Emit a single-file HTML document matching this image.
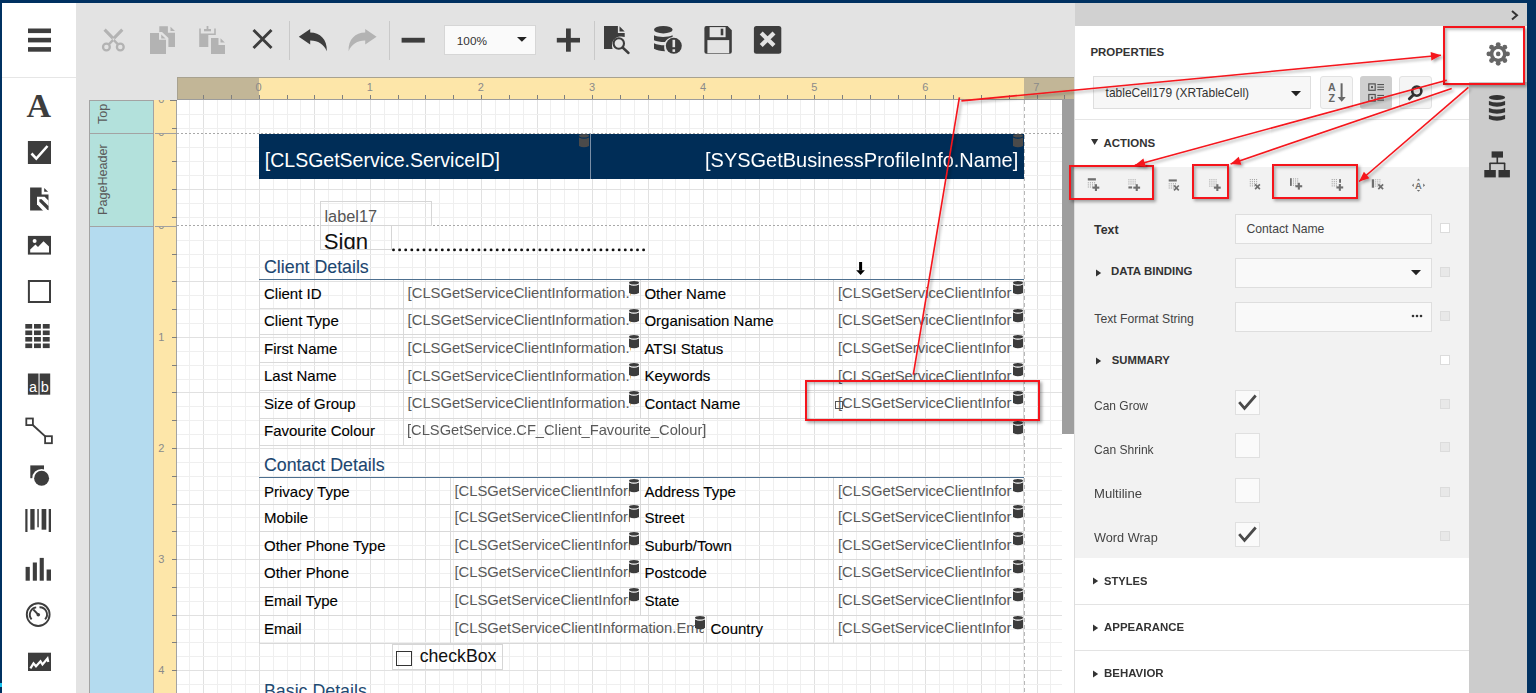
<!DOCTYPE html><html><head><meta charset="utf-8"><style>
html,body{margin:0;padding:0;}
body{width:1536px;height:693px;overflow:hidden;position:relative;background:#003161;font-family:"Liberation Sans",sans-serif;}
div{box-sizing:border-box;}
svg{position:absolute;overflow:visible;}
</style></head><body>
<div style="position:absolute;left:2px;top:3px;width:74px;height:690px;background:#fff;"></div>
<div style="position:absolute;left:2px;top:77px;width:74px;height:1px;background:#e6e6e6;"></div>
<div style="position:absolute;left:76px;top:3px;width:999px;height:690px;background:#e3e3e3;"></div>
<div style="position:absolute;left:1075px;top:3px;width:452px;height:23px;background:#d1d1d1;"></div>
<div style="position:absolute;left:1075px;top:26px;width:394px;height:667px;background:#fff;"></div>
<div style="position:absolute;left:1469px;top:26px;width:58px;height:667px;background:#cccccc;"></div>
<div style="position:absolute;left:1469px;top:26px;width:58px;height:56px;background:#fff;"></div>
<div style="position:absolute;left:177px;top:77px;width:898px;height:23px;background:#c2b697;border-top:1px solid #a8a290;border-left:1px solid #a8a290;border-bottom:1px solid #9c9c9c;"></div>
<div style="position:absolute;left:259px;top:78px;width:765px;height:21px;background:#fde6a9;"></div>
<div style="position:absolute;left:203px;top:95px;width:1px;height:4px;background:#7f7f7f;"></div>
<div style="position:absolute;left:231px;top:95px;width:1px;height:4px;background:#7f7f7f;"></div>
<div style="position:absolute;left:259px;top:95px;width:1px;height:4px;background:#7f7f7f;"></div>
<div style="position:absolute;left:287px;top:95px;width:1px;height:4px;background:#7f7f7f;"></div>
<div style="position:absolute;left:314px;top:95px;width:1px;height:4px;background:#7f7f7f;"></div>
<div style="position:absolute;left:342px;top:95px;width:1px;height:4px;background:#7f7f7f;"></div>
<div style="position:absolute;left:370px;top:95px;width:1px;height:4px;background:#7f7f7f;"></div>
<div style="position:absolute;left:398px;top:95px;width:1px;height:4px;background:#7f7f7f;"></div>
<div style="position:absolute;left:425px;top:95px;width:1px;height:4px;background:#7f7f7f;"></div>
<div style="position:absolute;left:453px;top:95px;width:1px;height:4px;background:#7f7f7f;"></div>
<div style="position:absolute;left:481px;top:95px;width:1px;height:4px;background:#7f7f7f;"></div>
<div style="position:absolute;left:509px;top:95px;width:1px;height:4px;background:#7f7f7f;"></div>
<div style="position:absolute;left:537px;top:95px;width:1px;height:4px;background:#7f7f7f;"></div>
<div style="position:absolute;left:564px;top:95px;width:1px;height:4px;background:#7f7f7f;"></div>
<div style="position:absolute;left:592px;top:95px;width:1px;height:4px;background:#7f7f7f;"></div>
<div style="position:absolute;left:620px;top:95px;width:1px;height:4px;background:#7f7f7f;"></div>
<div style="position:absolute;left:648px;top:95px;width:1px;height:4px;background:#7f7f7f;"></div>
<div style="position:absolute;left:675px;top:95px;width:1px;height:4px;background:#7f7f7f;"></div>
<div style="position:absolute;left:703px;top:95px;width:1px;height:4px;background:#7f7f7f;"></div>
<div style="position:absolute;left:731px;top:95px;width:1px;height:4px;background:#7f7f7f;"></div>
<div style="position:absolute;left:759px;top:95px;width:1px;height:4px;background:#7f7f7f;"></div>
<div style="position:absolute;left:787px;top:95px;width:1px;height:4px;background:#7f7f7f;"></div>
<div style="position:absolute;left:814px;top:95px;width:1px;height:4px;background:#7f7f7f;"></div>
<div style="position:absolute;left:842px;top:95px;width:1px;height:4px;background:#7f7f7f;"></div>
<div style="position:absolute;left:870px;top:95px;width:1px;height:4px;background:#7f7f7f;"></div>
<div style="position:absolute;left:898px;top:95px;width:1px;height:4px;background:#7f7f7f;"></div>
<div style="position:absolute;left:925px;top:95px;width:1px;height:4px;background:#7f7f7f;"></div>
<div style="position:absolute;left:953px;top:95px;width:1px;height:4px;background:#7f7f7f;"></div>
<div style="position:absolute;left:981px;top:95px;width:1px;height:4px;background:#7f7f7f;"></div>
<div style="position:absolute;left:1009px;top:95px;width:1px;height:4px;background:#7f7f7f;"></div>
<div style="position:absolute;left:1037px;top:95px;width:1px;height:4px;background:#7f7f7f;"></div>
<div style="position:absolute;left:1064px;top:95px;width:1px;height:4px;background:#7f7f7f;"></div>
<div style="position:absolute;left:255.60px;top:81.69px;font-size:11px;line-height:11px;height:11px;white-space:nowrap;color:#8a8a8a;">0</div>
<div style="position:absolute;left:366.71px;top:81.69px;font-size:11px;line-height:11px;height:11px;white-space:nowrap;color:#8a8a8a;">1</div>
<div style="position:absolute;left:477.82px;top:81.69px;font-size:11px;line-height:11px;height:11px;white-space:nowrap;color:#8a8a8a;">2</div>
<div style="position:absolute;left:588.93px;top:81.69px;font-size:11px;line-height:11px;height:11px;white-space:nowrap;color:#8a8a8a;">3</div>
<div style="position:absolute;left:700.04px;top:81.69px;font-size:11px;line-height:11px;height:11px;white-space:nowrap;color:#8a8a8a;">4</div>
<div style="position:absolute;left:811.15px;top:81.69px;font-size:11px;line-height:11px;height:11px;white-space:nowrap;color:#8a8a8a;">5</div>
<div style="position:absolute;left:922.26px;top:81.69px;font-size:11px;line-height:11px;height:11px;white-space:nowrap;color:#8a8a8a;">6</div>
<div style="position:absolute;left:1033.37px;top:81.69px;font-size:11px;line-height:11px;height:11px;white-space:nowrap;color:#8a8a8a;">7</div>
<div style="position:absolute;left:89px;top:100px;width:65px;height:34px;background:#b3e1dc;border:1px solid #a3a3a3;border-right:none;"></div>
<div style="position:absolute;left:89px;top:133px;width:65px;height:94px;background:#b3e1dc;border:1px solid #a3a3a3;border-right:none;"></div>
<div style="position:absolute;left:89px;top:226px;width:65px;height:467px;background:#b4dbef;border-top:1px solid #a3a3a3;border-left:1px solid #a3a3a3;"></div>
<div style="position:absolute;left:97px;top:123.7px;transform:rotate(-90deg);transform-origin:0 0;font-size:12.6px;line-height:12px;color:#5a5a5a;white-space:nowrap;">Top</div>
<div style="position:absolute;left:97px;top:214.9px;transform:rotate(-90deg);transform-origin:0 0;font-size:12.6px;line-height:12px;color:#5a5a5a;white-space:nowrap;">PageHeader</div>
<div style="position:absolute;left:153px;top:100px;width:24px;height:593px;background:#fde6a9;border-left:1px solid #a3a3a3;border-right:1px solid #a3a3a3;"></div>
<div style="position:absolute;left:170px;top:100px;width:7px;height:1px;background:#7f7f7f;"></div>
<div style="position:absolute;left:172px;top:128px;width:5px;height:1px;background:#7f7f7f;"></div>
<div style="position:absolute;left:170px;top:133px;width:7px;height:1px;background:#7f7f7f;"></div>
<div style="position:absolute;left:172px;top:161px;width:5px;height:1px;background:#7f7f7f;"></div>
<div style="position:absolute;left:172px;top:189px;width:5px;height:1px;background:#7f7f7f;"></div>
<div style="position:absolute;left:172px;top:217px;width:5px;height:1px;background:#7f7f7f;"></div>
<div style="position:absolute;left:170px;top:226px;width:7px;height:1px;background:#7f7f7f;"></div>
<div style="position:absolute;left:172px;top:254px;width:5px;height:1px;background:#7f7f7f;"></div>
<div style="position:absolute;left:172px;top:281px;width:5px;height:1px;background:#7f7f7f;"></div>
<div style="position:absolute;left:172px;top:309px;width:5px;height:1px;background:#7f7f7f;"></div>
<div style="position:absolute;left:172px;top:337px;width:5px;height:1px;background:#7f7f7f;"></div>
<div style="position:absolute;left:172px;top:365px;width:5px;height:1px;background:#7f7f7f;"></div>
<div style="position:absolute;left:172px;top:392px;width:5px;height:1px;background:#7f7f7f;"></div>
<div style="position:absolute;left:172px;top:420px;width:5px;height:1px;background:#7f7f7f;"></div>
<div style="position:absolute;left:172px;top:448px;width:5px;height:1px;background:#7f7f7f;"></div>
<div style="position:absolute;left:172px;top:476px;width:5px;height:1px;background:#7f7f7f;"></div>
<div style="position:absolute;left:172px;top:504px;width:5px;height:1px;background:#7f7f7f;"></div>
<div style="position:absolute;left:172px;top:531px;width:5px;height:1px;background:#7f7f7f;"></div>
<div style="position:absolute;left:172px;top:559px;width:5px;height:1px;background:#7f7f7f;"></div>
<div style="position:absolute;left:172px;top:587px;width:5px;height:1px;background:#7f7f7f;"></div>
<div style="position:absolute;left:172px;top:615px;width:5px;height:1px;background:#7f7f7f;"></div>
<div style="position:absolute;left:172px;top:642px;width:5px;height:1px;background:#7f7f7f;"></div>
<div style="position:absolute;left:172px;top:670px;width:5px;height:1px;background:#7f7f7f;"></div>
<div style="position:absolute;left:172px;top:698px;width:5px;height:1px;background:#7f7f7f;"></div>
<div style="position:absolute;left:153px;top:100.0px;width:18px;height:4px;overflow:hidden;"><div style="position:absolute;left:5.2px;top:-6.3px;font-size:11px;line-height:11px;color:#8a8a8a">0</div></div>
<div style="position:absolute;left:153px;top:133.3px;width:18px;height:4px;overflow:hidden;"><div style="position:absolute;left:5.2px;top:-6.3px;font-size:11px;line-height:11px;color:#8a8a8a">0</div></div>
<div style="position:absolute;left:155px;top:133px;width:22px;height:1px;background:#a0a0a0;"></div>
<div style="position:absolute;left:153px;top:225.8px;width:18px;height:4px;overflow:hidden;"><div style="position:absolute;left:5.2px;top:-6.3px;font-size:11px;line-height:11px;color:#8a8a8a">0</div></div>
<div style="position:absolute;left:155px;top:226px;width:22px;height:1px;background:#a0a0a0;"></div>
<div style="position:absolute;left:158.30px;top:331.60px;font-size:11px;line-height:11px;height:11px;white-space:nowrap;color:#8a8a8a;">1</div>
<div style="position:absolute;left:158.30px;top:442.71px;font-size:11px;line-height:11px;height:11px;white-space:nowrap;color:#8a8a8a;">2</div>
<div style="position:absolute;left:158.30px;top:553.82px;font-size:11px;line-height:11px;height:11px;white-space:nowrap;color:#8a8a8a;">3</div>
<div style="position:absolute;left:158.30px;top:664.93px;font-size:11px;line-height:11px;height:11px;white-space:nowrap;color:#8a8a8a;">4</div>
<div style="position:absolute;left:177px;top:100px;width:885px;height:593px;background:#fff;overflow:hidden;"></div>
<div style="position:absolute;left:189px;top:100px;width:1px;height:593px;background:#efefef"></div>
<div style="position:absolute;left:203px;top:100px;width:1px;height:593px;background:#e1e1e1"></div>
<div style="position:absolute;left:217px;top:100px;width:1px;height:593px;background:#efefef"></div>
<div style="position:absolute;left:231px;top:100px;width:1px;height:593px;background:#efefef"></div>
<div style="position:absolute;left:245px;top:100px;width:1px;height:593px;background:#efefef"></div>
<div style="position:absolute;left:259px;top:100px;width:1px;height:593px;background:#e1e1e1"></div>
<div style="position:absolute;left:273px;top:100px;width:1px;height:593px;background:#efefef"></div>
<div style="position:absolute;left:287px;top:100px;width:1px;height:593px;background:#efefef"></div>
<div style="position:absolute;left:300px;top:100px;width:1px;height:593px;background:#efefef"></div>
<div style="position:absolute;left:314px;top:100px;width:1px;height:593px;background:#e1e1e1"></div>
<div style="position:absolute;left:328px;top:100px;width:1px;height:593px;background:#efefef"></div>
<div style="position:absolute;left:342px;top:100px;width:1px;height:593px;background:#efefef"></div>
<div style="position:absolute;left:356px;top:100px;width:1px;height:593px;background:#efefef"></div>
<div style="position:absolute;left:370px;top:100px;width:1px;height:593px;background:#e1e1e1"></div>
<div style="position:absolute;left:384px;top:100px;width:1px;height:593px;background:#efefef"></div>
<div style="position:absolute;left:398px;top:100px;width:1px;height:593px;background:#efefef"></div>
<div style="position:absolute;left:412px;top:100px;width:1px;height:593px;background:#efefef"></div>
<div style="position:absolute;left:425px;top:100px;width:1px;height:593px;background:#e1e1e1"></div>
<div style="position:absolute;left:439px;top:100px;width:1px;height:593px;background:#efefef"></div>
<div style="position:absolute;left:453px;top:100px;width:1px;height:593px;background:#efefef"></div>
<div style="position:absolute;left:467px;top:100px;width:1px;height:593px;background:#efefef"></div>
<div style="position:absolute;left:481px;top:100px;width:1px;height:593px;background:#e1e1e1"></div>
<div style="position:absolute;left:495px;top:100px;width:1px;height:593px;background:#efefef"></div>
<div style="position:absolute;left:509px;top:100px;width:1px;height:593px;background:#efefef"></div>
<div style="position:absolute;left:523px;top:100px;width:1px;height:593px;background:#efefef"></div>
<div style="position:absolute;left:537px;top:100px;width:1px;height:593px;background:#e1e1e1"></div>
<div style="position:absolute;left:550px;top:100px;width:1px;height:593px;background:#efefef"></div>
<div style="position:absolute;left:564px;top:100px;width:1px;height:593px;background:#efefef"></div>
<div style="position:absolute;left:578px;top:100px;width:1px;height:593px;background:#efefef"></div>
<div style="position:absolute;left:592px;top:100px;width:1px;height:593px;background:#e1e1e1"></div>
<div style="position:absolute;left:606px;top:100px;width:1px;height:593px;background:#efefef"></div>
<div style="position:absolute;left:620px;top:100px;width:1px;height:593px;background:#efefef"></div>
<div style="position:absolute;left:634px;top:100px;width:1px;height:593px;background:#efefef"></div>
<div style="position:absolute;left:648px;top:100px;width:1px;height:593px;background:#e1e1e1"></div>
<div style="position:absolute;left:662px;top:100px;width:1px;height:593px;background:#efefef"></div>
<div style="position:absolute;left:675px;top:100px;width:1px;height:593px;background:#efefef"></div>
<div style="position:absolute;left:689px;top:100px;width:1px;height:593px;background:#efefef"></div>
<div style="position:absolute;left:703px;top:100px;width:1px;height:593px;background:#e1e1e1"></div>
<div style="position:absolute;left:717px;top:100px;width:1px;height:593px;background:#efefef"></div>
<div style="position:absolute;left:731px;top:100px;width:1px;height:593px;background:#efefef"></div>
<div style="position:absolute;left:745px;top:100px;width:1px;height:593px;background:#efefef"></div>
<div style="position:absolute;left:759px;top:100px;width:1px;height:593px;background:#e1e1e1"></div>
<div style="position:absolute;left:773px;top:100px;width:1px;height:593px;background:#efefef"></div>
<div style="position:absolute;left:787px;top:100px;width:1px;height:593px;background:#efefef"></div>
<div style="position:absolute;left:800px;top:100px;width:1px;height:593px;background:#efefef"></div>
<div style="position:absolute;left:814px;top:100px;width:1px;height:593px;background:#e1e1e1"></div>
<div style="position:absolute;left:828px;top:100px;width:1px;height:593px;background:#efefef"></div>
<div style="position:absolute;left:842px;top:100px;width:1px;height:593px;background:#efefef"></div>
<div style="position:absolute;left:856px;top:100px;width:1px;height:593px;background:#efefef"></div>
<div style="position:absolute;left:870px;top:100px;width:1px;height:593px;background:#e1e1e1"></div>
<div style="position:absolute;left:884px;top:100px;width:1px;height:593px;background:#efefef"></div>
<div style="position:absolute;left:898px;top:100px;width:1px;height:593px;background:#efefef"></div>
<div style="position:absolute;left:912px;top:100px;width:1px;height:593px;background:#efefef"></div>
<div style="position:absolute;left:925px;top:100px;width:1px;height:593px;background:#e1e1e1"></div>
<div style="position:absolute;left:939px;top:100px;width:1px;height:593px;background:#efefef"></div>
<div style="position:absolute;left:953px;top:100px;width:1px;height:593px;background:#efefef"></div>
<div style="position:absolute;left:967px;top:100px;width:1px;height:593px;background:#efefef"></div>
<div style="position:absolute;left:981px;top:100px;width:1px;height:593px;background:#e1e1e1"></div>
<div style="position:absolute;left:995px;top:100px;width:1px;height:593px;background:#efefef"></div>
<div style="position:absolute;left:1009px;top:100px;width:1px;height:593px;background:#efefef"></div>
<div style="position:absolute;left:1023px;top:100px;width:1px;height:593px;background:#efefef"></div>
<div style="position:absolute;left:1037px;top:100px;width:1px;height:593px;background:#e1e1e1"></div>
<div style="position:absolute;left:1050px;top:100px;width:1px;height:593px;background:#efefef"></div>
<div style="position:absolute;left:177px;top:114px;width:885px;height:1px;background:#efefef"></div>
<div style="position:absolute;left:177px;top:128px;width:885px;height:1px;background:#efefef"></div>
<div style="position:absolute;left:177px;top:147px;width:885px;height:1px;background:#efefef"></div>
<div style="position:absolute;left:177px;top:161px;width:885px;height:1px;background:#efefef"></div>
<div style="position:absolute;left:177px;top:175px;width:885px;height:1px;background:#efefef"></div>
<div style="position:absolute;left:177px;top:189px;width:885px;height:1px;background:#e1e1e1"></div>
<div style="position:absolute;left:177px;top:203px;width:885px;height:1px;background:#efefef"></div>
<div style="position:absolute;left:177px;top:217px;width:885px;height:1px;background:#efefef"></div>
<div style="position:absolute;left:177px;top:240px;width:885px;height:1px;background:#efefef"></div>
<div style="position:absolute;left:177px;top:254px;width:885px;height:1px;background:#efefef"></div>
<div style="position:absolute;left:177px;top:267px;width:885px;height:1px;background:#efefef"></div>
<div style="position:absolute;left:177px;top:281px;width:885px;height:1px;background:#e1e1e1"></div>
<div style="position:absolute;left:177px;top:295px;width:885px;height:1px;background:#efefef"></div>
<div style="position:absolute;left:177px;top:309px;width:885px;height:1px;background:#efefef"></div>
<div style="position:absolute;left:177px;top:323px;width:885px;height:1px;background:#efefef"></div>
<div style="position:absolute;left:177px;top:337px;width:885px;height:1px;background:#e1e1e1"></div>
<div style="position:absolute;left:177px;top:351px;width:885px;height:1px;background:#efefef"></div>
<div style="position:absolute;left:177px;top:365px;width:885px;height:1px;background:#efefef"></div>
<div style="position:absolute;left:177px;top:379px;width:885px;height:1px;background:#efefef"></div>
<div style="position:absolute;left:177px;top:392px;width:885px;height:1px;background:#e1e1e1"></div>
<div style="position:absolute;left:177px;top:406px;width:885px;height:1px;background:#efefef"></div>
<div style="position:absolute;left:177px;top:420px;width:885px;height:1px;background:#efefef"></div>
<div style="position:absolute;left:177px;top:434px;width:885px;height:1px;background:#efefef"></div>
<div style="position:absolute;left:177px;top:448px;width:885px;height:1px;background:#e1e1e1"></div>
<div style="position:absolute;left:177px;top:462px;width:885px;height:1px;background:#efefef"></div>
<div style="position:absolute;left:177px;top:476px;width:885px;height:1px;background:#efefef"></div>
<div style="position:absolute;left:177px;top:490px;width:885px;height:1px;background:#efefef"></div>
<div style="position:absolute;left:177px;top:504px;width:885px;height:1px;background:#e1e1e1"></div>
<div style="position:absolute;left:177px;top:517px;width:885px;height:1px;background:#efefef"></div>
<div style="position:absolute;left:177px;top:531px;width:885px;height:1px;background:#efefef"></div>
<div style="position:absolute;left:177px;top:545px;width:885px;height:1px;background:#efefef"></div>
<div style="position:absolute;left:177px;top:559px;width:885px;height:1px;background:#e1e1e1"></div>
<div style="position:absolute;left:177px;top:573px;width:885px;height:1px;background:#efefef"></div>
<div style="position:absolute;left:177px;top:587px;width:885px;height:1px;background:#efefef"></div>
<div style="position:absolute;left:177px;top:601px;width:885px;height:1px;background:#efefef"></div>
<div style="position:absolute;left:177px;top:615px;width:885px;height:1px;background:#e1e1e1"></div>
<div style="position:absolute;left:177px;top:629px;width:885px;height:1px;background:#efefef"></div>
<div style="position:absolute;left:177px;top:642px;width:885px;height:1px;background:#efefef"></div>
<div style="position:absolute;left:177px;top:656px;width:885px;height:1px;background:#efefef"></div>
<div style="position:absolute;left:177px;top:670px;width:885px;height:1px;background:#e1e1e1"></div>
<div style="position:absolute;left:177px;top:684px;width:885px;height:1px;background:#efefef"></div>
<div style="position:absolute;left:177px;top:698px;width:885px;height:1px;background:#efefef"></div>
<div style="position:absolute;left:177px;top:133px;width:885px;height:1px;background:repeating-linear-gradient(90deg,#a8a8a8 0 2px,transparent 2px 4px);"></div>
<div style="position:absolute;left:177px;top:225px;width:885px;height:1px;background:repeating-linear-gradient(90deg,#a8a8a8 0 2px,transparent 2px 4px);"></div>
<div style="position:absolute;left:1024px;top:100px;width:1px;height:593px;background:repeating-linear-gradient(180deg,#b8b8b8 0 4px,transparent 4px 7px);"></div>
<div style="position:absolute;left:1062px;top:100px;width:13px;height:334px;background:#9e9e9e;"></div>
<div style="position:absolute;left:1062px;top:434px;width:13px;height:259px;background:#fff;"></div>
<div style="position:absolute;left:1074px;top:77px;width:1px;height:616px;background:#dedede;"></div>
<div style="position:absolute;left:259px;top:134px;width:764.5px;height:45px;background:#002d57;"></div>
<div style="position:absolute;left:590px;top:134px;width:1px;height:45px;background:#7a8ea6;"></div>
<div style="position:absolute;left:264.80px;top:150.69px;font-size:19.5px;line-height:19.5px;height:19.5px;white-space:nowrap;color:#fff;">[CLSGetService.ServiceID]</div>
<div style="position:absolute;left:705.40px;top:150.69px;font-size:19.5px;line-height:19.5px;height:19.5px;white-space:nowrap;color:#fff;transform:scaleX(1.0248);transform-origin:0 0;">[SYSGetBusinessProfileInfo.Name]</div>
<svg style="left:579px;top:134px" width="10" height="14" viewBox="0 0 10 14"><ellipse cx="5" cy="1.8" rx="5" ry="1.8" fill="#4a4a4a"/><path d="M0 3.6 Q5 6 10 3.6 L10 12 Q5 14.4 0 12 Z" fill="#4a4a4a"/></svg>
<svg style="left:1013px;top:134px" width="10" height="14" viewBox="0 0 10 14"><ellipse cx="5" cy="1.8" rx="5" ry="1.8" fill="#4a4a4a"/><path d="M0 3.6 Q5 6 10 3.6 L10 12 Q5 14.4 0 12 Z" fill="#4a4a4a"/></svg>
<div style="position:absolute;left:320px;top:201px;width:112px;height:25px;border:1px solid #d6d6d6;"></div>
<div style="position:absolute;left:324.50px;top:207.90px;font-size:16.3px;line-height:16.3px;height:16.3px;white-space:nowrap;color:#555;">label17</div>
<div style="position:absolute;left:320px;top:225px;width:72px;height:25px;border:1px solid #d6d6d6;overflow:hidden;"><div style="position:absolute;left:2.8px;top:4.5px;font-size:22.2px;line-height:22px;color:#111;white-space:nowrap;">Sign</div></div>
<svg style="left:390px;top:246px" width="260" height="8"><circle cx="3.5" cy="3.9" r="1.45" fill="#111"/><circle cx="9.6" cy="3.9" r="1.45" fill="#111"/><circle cx="15.7" cy="3.9" r="1.45" fill="#111"/><circle cx="21.8" cy="3.9" r="1.45" fill="#111"/><circle cx="27.9" cy="3.9" r="1.45" fill="#111"/><circle cx="34.0" cy="3.9" r="1.45" fill="#111"/><circle cx="40.1" cy="3.9" r="1.45" fill="#111"/><circle cx="46.2" cy="3.9" r="1.45" fill="#111"/><circle cx="52.3" cy="3.9" r="1.45" fill="#111"/><circle cx="58.4" cy="3.9" r="1.45" fill="#111"/><circle cx="64.5" cy="3.9" r="1.45" fill="#111"/><circle cx="70.6" cy="3.9" r="1.45" fill="#111"/><circle cx="76.7" cy="3.9" r="1.45" fill="#111"/><circle cx="82.8" cy="3.9" r="1.45" fill="#111"/><circle cx="88.9" cy="3.9" r="1.45" fill="#111"/><circle cx="95.0" cy="3.9" r="1.45" fill="#111"/><circle cx="101.1" cy="3.9" r="1.45" fill="#111"/><circle cx="107.2" cy="3.9" r="1.45" fill="#111"/><circle cx="113.3" cy="3.9" r="1.45" fill="#111"/><circle cx="119.4" cy="3.9" r="1.45" fill="#111"/><circle cx="125.5" cy="3.9" r="1.45" fill="#111"/><circle cx="131.6" cy="3.9" r="1.45" fill="#111"/><circle cx="137.7" cy="3.9" r="1.45" fill="#111"/><circle cx="143.8" cy="3.9" r="1.45" fill="#111"/><circle cx="149.9" cy="3.9" r="1.45" fill="#111"/><circle cx="156.0" cy="3.9" r="1.45" fill="#111"/><circle cx="162.1" cy="3.9" r="1.45" fill="#111"/><circle cx="168.2" cy="3.9" r="1.45" fill="#111"/><circle cx="174.3" cy="3.9" r="1.45" fill="#111"/><circle cx="180.4" cy="3.9" r="1.45" fill="#111"/><circle cx="186.5" cy="3.9" r="1.45" fill="#111"/><circle cx="192.6" cy="3.9" r="1.45" fill="#111"/><circle cx="198.7" cy="3.9" r="1.45" fill="#111"/><circle cx="204.8" cy="3.9" r="1.45" fill="#111"/><circle cx="210.9" cy="3.9" r="1.45" fill="#111"/><circle cx="217.0" cy="3.9" r="1.45" fill="#111"/><circle cx="223.1" cy="3.9" r="1.45" fill="#111"/><circle cx="229.2" cy="3.9" r="1.45" fill="#111"/><circle cx="235.3" cy="3.9" r="1.45" fill="#111"/><circle cx="241.4" cy="3.9" r="1.45" fill="#111"/><circle cx="247.5" cy="3.9" r="1.45" fill="#111"/><circle cx="253.6" cy="3.9" r="1.45" fill="#111"/></svg>
<svg style="left:855px;top:261px" width="12" height="15" viewBox="0 0 12 15"><rect x="4.1" y="1" width="3" height="8.5" fill="#000"/><path d="M1.2 9.2 L9.9 9.2 L5.6 13.9 Z" fill="#000"/></svg>
<div style="position:absolute;left:264.00px;top:258.93px;font-size:17.8px;line-height:17.8px;height:17.8px;white-space:nowrap;color:#1b4670;-webkit-text-stroke:0.1px #1b4670;">Client Details</div>
<div style="position:absolute;left:259px;top:279px;width:765px;height:1px;background:#4d6f8f;"></div>
<div style="position:absolute;left:264.00px;top:286.10px;font-size:15px;line-height:15px;height:15px;white-space:nowrap;color:#000;-webkit-text-stroke:0.12px #000;">Client ID</div>
<div style="position:absolute;left:404px;top:281px;width:227px;height:26px;overflow:hidden;">
<div style="position:absolute;left:3.60px;top:5.27px;font-size:14.8px;line-height:14.8px;white-space:nowrap;color:#595959;transform:scaleX(1.0000);transform-origin:0 0">[CLSGetServiceClientInformation.ClientData]</div></div>
<svg style="left:629px;top:281px" width="10" height="14" viewBox="0 0 10 14"><ellipse cx="5" cy="1.8" rx="5" ry="1.8" fill="#3c3c3c"/><path d="M0 3.6 Q5 6 10 3.6 L10 12 Q5 14.4 0 12 Z" fill="#3c3c3c"/></svg>
<div style="position:absolute;left:644.40px;top:286.10px;font-size:15px;line-height:15px;height:15px;white-space:nowrap;color:#000;-webkit-text-stroke:0.12px #000;">Other Name</div>
<div style="position:absolute;left:834px;top:281px;width:177.5px;height:26px;overflow:hidden;">
<div style="position:absolute;left:4.00px;top:5.27px;font-size:14.8px;line-height:14.8px;white-space:nowrap;color:#595959;transform:scaleX(1.0000);transform-origin:0 0">[CLSGetServiceClientInformation.Data]</div></div>
<svg style="left:1013px;top:281px" width="10" height="14" viewBox="0 0 10 14"><ellipse cx="5" cy="1.8" rx="5" ry="1.8" fill="#3c3c3c"/><path d="M0 3.6 Q5 6 10 3.6 L10 12 Q5 14.4 0 12 Z" fill="#3c3c3c"/></svg>
<div style="position:absolute;left:264.00px;top:312.90px;font-size:15px;line-height:15px;height:15px;white-space:nowrap;color:#000;-webkit-text-stroke:0.12px #000;">Client Type</div>
<div style="position:absolute;left:404px;top:309px;width:227px;height:26px;overflow:hidden;">
<div style="position:absolute;left:3.60px;top:4.07px;font-size:14.8px;line-height:14.8px;white-space:nowrap;color:#595959;transform:scaleX(1.0000);transform-origin:0 0">[CLSGetServiceClientInformation.ClientData]</div></div>
<svg style="left:629px;top:309px" width="10" height="14" viewBox="0 0 10 14"><ellipse cx="5" cy="1.8" rx="5" ry="1.8" fill="#3c3c3c"/><path d="M0 3.6 Q5 6 10 3.6 L10 12 Q5 14.4 0 12 Z" fill="#3c3c3c"/></svg>
<div style="position:absolute;left:644.40px;top:312.90px;font-size:15px;line-height:15px;height:15px;white-space:nowrap;color:#000;-webkit-text-stroke:0.12px #000;">Organisation Name</div>
<div style="position:absolute;left:834px;top:309px;width:177.5px;height:26px;overflow:hidden;">
<div style="position:absolute;left:4.00px;top:4.07px;font-size:14.8px;line-height:14.8px;white-space:nowrap;color:#595959;transform:scaleX(1.0000);transform-origin:0 0">[CLSGetServiceClientInformation.Data]</div></div>
<svg style="left:1013px;top:309px" width="10" height="14" viewBox="0 0 10 14"><ellipse cx="5" cy="1.8" rx="5" ry="1.8" fill="#3c3c3c"/><path d="M0 3.6 Q5 6 10 3.6 L10 12 Q5 14.4 0 12 Z" fill="#3c3c3c"/></svg>
<div style="position:absolute;left:264.00px;top:340.70px;font-size:15px;line-height:15px;height:15px;white-space:nowrap;color:#000;-webkit-text-stroke:0.12px #000;">First Name</div>
<div style="position:absolute;left:404px;top:335px;width:227px;height:26px;overflow:hidden;">
<div style="position:absolute;left:3.60px;top:5.87px;font-size:14.8px;line-height:14.8px;white-space:nowrap;color:#595959;transform:scaleX(1.0000);transform-origin:0 0">[CLSGetServiceClientInformation.ClientData]</div></div>
<svg style="left:629px;top:335px" width="10" height="14" viewBox="0 0 10 14"><ellipse cx="5" cy="1.8" rx="5" ry="1.8" fill="#3c3c3c"/><path d="M0 3.6 Q5 6 10 3.6 L10 12 Q5 14.4 0 12 Z" fill="#3c3c3c"/></svg>
<div style="position:absolute;left:644.40px;top:340.70px;font-size:15px;line-height:15px;height:15px;white-space:nowrap;color:#000;-webkit-text-stroke:0.12px #000;">ATSI Status</div>
<div style="position:absolute;left:834px;top:335px;width:177.5px;height:26px;overflow:hidden;">
<div style="position:absolute;left:4.00px;top:5.87px;font-size:14.8px;line-height:14.8px;white-space:nowrap;color:#595959;transform:scaleX(1.0000);transform-origin:0 0">[CLSGetServiceClientInformation.Data]</div></div>
<svg style="left:1013px;top:335px" width="10" height="14" viewBox="0 0 10 14"><ellipse cx="5" cy="1.8" rx="5" ry="1.8" fill="#3c3c3c"/><path d="M0 3.6 Q5 6 10 3.6 L10 12 Q5 14.4 0 12 Z" fill="#3c3c3c"/></svg>
<div style="position:absolute;left:264.00px;top:368.40px;font-size:15px;line-height:15px;height:15px;white-space:nowrap;color:#000;-webkit-text-stroke:0.12px #000;">Last Name</div>
<div style="position:absolute;left:404px;top:363px;width:227px;height:26px;overflow:hidden;">
<div style="position:absolute;left:3.60px;top:5.57px;font-size:14.8px;line-height:14.8px;white-space:nowrap;color:#595959;transform:scaleX(1.0000);transform-origin:0 0">[CLSGetServiceClientInformation.ClientData]</div></div>
<svg style="left:629px;top:363px" width="10" height="14" viewBox="0 0 10 14"><ellipse cx="5" cy="1.8" rx="5" ry="1.8" fill="#3c3c3c"/><path d="M0 3.6 Q5 6 10 3.6 L10 12 Q5 14.4 0 12 Z" fill="#3c3c3c"/></svg>
<div style="position:absolute;left:644.40px;top:368.40px;font-size:15px;line-height:15px;height:15px;white-space:nowrap;color:#000;-webkit-text-stroke:0.12px #000;">Keywords</div>
<div style="position:absolute;left:834px;top:363px;width:177.5px;height:26px;overflow:hidden;">
<div style="position:absolute;left:4.00px;top:5.57px;font-size:14.8px;line-height:14.8px;white-space:nowrap;color:#595959;transform:scaleX(1.0000);transform-origin:0 0">[CLSGetServiceClientInformation.Data]</div></div>
<svg style="left:1013px;top:363px" width="10" height="14" viewBox="0 0 10 14"><ellipse cx="5" cy="1.8" rx="5" ry="1.8" fill="#3c3c3c"/><path d="M0 3.6 Q5 6 10 3.6 L10 12 Q5 14.4 0 12 Z" fill="#3c3c3c"/></svg>
<div style="position:absolute;left:264.00px;top:396.10px;font-size:15px;line-height:15px;height:15px;white-space:nowrap;color:#000;-webkit-text-stroke:0.12px #000;">Size of Group</div>
<div style="position:absolute;left:404px;top:391px;width:227px;height:26px;overflow:hidden;">
<div style="position:absolute;left:3.60px;top:5.27px;font-size:14.8px;line-height:14.8px;white-space:nowrap;color:#595959;transform:scaleX(1.0000);transform-origin:0 0">[CLSGetServiceClientInformation.ClientData]</div></div>
<svg style="left:629px;top:391px" width="10" height="14" viewBox="0 0 10 14"><ellipse cx="5" cy="1.8" rx="5" ry="1.8" fill="#3c3c3c"/><path d="M0 3.6 Q5 6 10 3.6 L10 12 Q5 14.4 0 12 Z" fill="#3c3c3c"/></svg>
<div style="position:absolute;left:644.40px;top:396.10px;font-size:15px;line-height:15px;height:15px;white-space:nowrap;color:#000;-webkit-text-stroke:0.12px #000;">Contact Name</div>
<div style="position:absolute;left:834px;top:391px;width:177.5px;height:26px;overflow:hidden;">
<div style="position:absolute;left:4.00px;top:5.27px;font-size:14.8px;line-height:14.8px;white-space:nowrap;color:#595959;transform:scaleX(1.0000);transform-origin:0 0">[CLSGetServiceClientInformation.Data]</div></div>
<svg style="left:1013px;top:391px" width="10" height="14" viewBox="0 0 10 14"><ellipse cx="5" cy="1.8" rx="5" ry="1.8" fill="#3c3c3c"/><path d="M0 3.6 Q5 6 10 3.6 L10 12 Q5 14.4 0 12 Z" fill="#3c3c3c"/></svg>
<div style="position:absolute;left:264.00px;top:422.90px;font-size:15px;line-height:15px;height:15px;white-space:nowrap;color:#000;-webkit-text-stroke:0.12px #000;">Favourite Colour</div>
<div style="position:absolute;left:407.30px;top:423.07px;font-size:14.8px;line-height:14.8px;height:14.8px;white-space:nowrap;color:#595959;transform:scaleX(0.9918);transform-origin:0 0;">[CLSGetService.CF_Client_Favourite_Colour]</div>
<svg style="left:1013px;top:421px" width="10" height="14" viewBox="0 0 10 14"><ellipse cx="5" cy="1.8" rx="5" ry="1.8" fill="#3c3c3c"/><path d="M0 3.6 Q5 6 10 3.6 L10 12 Q5 14.4 0 12 Z" fill="#3c3c3c"/></svg>
<div style="position:absolute;left:259px;top:308px;width:765px;height:1px;background:#d9d9d9;"></div>
<div style="position:absolute;left:259px;top:334px;width:765px;height:1px;background:#d9d9d9;"></div>
<div style="position:absolute;left:259px;top:362px;width:765px;height:1px;background:#d9d9d9;"></div>
<div style="position:absolute;left:259px;top:390px;width:765px;height:1px;background:#d9d9d9;"></div>
<div style="position:absolute;left:259px;top:418px;width:765px;height:1px;background:#d9d9d9;"></div>
<div style="position:absolute;left:259px;top:445px;width:765px;height:1px;background:#d9d9d9;"></div>
<div style="position:absolute;left:259px;top:280px;width:1px;height:165px;background:#d9d9d9;"></div>
<div style="position:absolute;left:403px;top:280px;width:1px;height:165px;background:#d9d9d9;"></div>
<div style="position:absolute;left:640px;top:280px;width:1px;height:138px;background:#d9d9d9;"></div>
<div style="position:absolute;left:833px;top:280px;width:1px;height:138px;background:#d9d9d9;"></div>
<div style="position:absolute;left:1023px;top:280px;width:1px;height:165px;background:#d9d9d9;"></div>
<div style="position:absolute;left:835px;top:401px;width:8px;height:8px;border:1px solid #555;"></div>
<div style="position:absolute;left:264.00px;top:456.53px;font-size:17.8px;line-height:17.8px;height:17.8px;white-space:nowrap;color:#1b4670;-webkit-text-stroke:0.1px #1b4670;">Contact Details</div>
<div style="position:absolute;left:259px;top:477px;width:765px;height:1px;background:#4d6f8f;"></div>
<div style="position:absolute;left:264.00px;top:483.50px;font-size:15px;line-height:15px;height:15px;white-space:nowrap;color:#000;-webkit-text-stroke:0.12px #000;">Privacy Type</div>
<div style="position:absolute;left:451px;top:479px;width:178.5px;height:26px;overflow:hidden;">
<div style="position:absolute;left:3.40px;top:4.67px;font-size:14.8px;line-height:14.8px;white-space:nowrap;color:#595959;transform:scaleX(1.0000);transform-origin:0 0">[CLSGetServiceClientInformation.Data]</div></div>
<svg style="left:629px;top:479px" width="10" height="14" viewBox="0 0 10 14"><ellipse cx="5" cy="1.8" rx="5" ry="1.8" fill="#3c3c3c"/><path d="M0 3.6 Q5 6 10 3.6 L10 12 Q5 14.4 0 12 Z" fill="#3c3c3c"/></svg>
<div style="position:absolute;left:644.40px;top:483.50px;font-size:15px;line-height:15px;height:15px;white-space:nowrap;color:#000;-webkit-text-stroke:0.12px #000;">Address Type</div>
<div style="position:absolute;left:834px;top:479px;width:177.5px;height:26px;overflow:hidden;">
<div style="position:absolute;left:4.00px;top:4.67px;font-size:14.8px;line-height:14.8px;white-space:nowrap;color:#595959;transform:scaleX(1.0000);transform-origin:0 0">[CLSGetServiceClientInformation.Data]</div></div>
<svg style="left:1013px;top:479px" width="10" height="14" viewBox="0 0 10 14"><ellipse cx="5" cy="1.8" rx="5" ry="1.8" fill="#3c3c3c"/><path d="M0 3.6 Q5 6 10 3.6 L10 12 Q5 14.4 0 12 Z" fill="#3c3c3c"/></svg>
<div style="position:absolute;left:264.00px;top:509.70px;font-size:15px;line-height:15px;height:15px;white-space:nowrap;color:#000;-webkit-text-stroke:0.12px #000;">Mobile</div>
<div style="position:absolute;left:451px;top:505px;width:178.5px;height:26px;overflow:hidden;">
<div style="position:absolute;left:3.40px;top:4.87px;font-size:14.8px;line-height:14.8px;white-space:nowrap;color:#595959;transform:scaleX(1.0000);transform-origin:0 0">[CLSGetServiceClientInformation.Data]</div></div>
<svg style="left:629px;top:505px" width="10" height="14" viewBox="0 0 10 14"><ellipse cx="5" cy="1.8" rx="5" ry="1.8" fill="#3c3c3c"/><path d="M0 3.6 Q5 6 10 3.6 L10 12 Q5 14.4 0 12 Z" fill="#3c3c3c"/></svg>
<div style="position:absolute;left:644.40px;top:509.70px;font-size:15px;line-height:15px;height:15px;white-space:nowrap;color:#000;-webkit-text-stroke:0.12px #000;">Street</div>
<div style="position:absolute;left:834px;top:505px;width:177.5px;height:26px;overflow:hidden;">
<div style="position:absolute;left:4.00px;top:4.87px;font-size:14.8px;line-height:14.8px;white-space:nowrap;color:#595959;transform:scaleX(1.0000);transform-origin:0 0">[CLSGetServiceClientInformation.Data]</div></div>
<svg style="left:1013px;top:505px" width="10" height="14" viewBox="0 0 10 14"><ellipse cx="5" cy="1.8" rx="5" ry="1.8" fill="#3c3c3c"/><path d="M0 3.6 Q5 6 10 3.6 L10 12 Q5 14.4 0 12 Z" fill="#3c3c3c"/></svg>
<div style="position:absolute;left:264.00px;top:537.60px;font-size:15px;line-height:15px;height:15px;white-space:nowrap;color:#000;-webkit-text-stroke:0.12px #000;">Other Phone Type</div>
<div style="position:absolute;left:451px;top:532px;width:178.5px;height:26px;overflow:hidden;">
<div style="position:absolute;left:3.40px;top:5.77px;font-size:14.8px;line-height:14.8px;white-space:nowrap;color:#595959;transform:scaleX(1.0000);transform-origin:0 0">[CLSGetServiceClientInformation.Data]</div></div>
<svg style="left:629px;top:532px" width="10" height="14" viewBox="0 0 10 14"><ellipse cx="5" cy="1.8" rx="5" ry="1.8" fill="#3c3c3c"/><path d="M0 3.6 Q5 6 10 3.6 L10 12 Q5 14.4 0 12 Z" fill="#3c3c3c"/></svg>
<div style="position:absolute;left:644.40px;top:537.60px;font-size:15px;line-height:15px;height:15px;white-space:nowrap;color:#000;-webkit-text-stroke:0.12px #000;">Suburb/Town</div>
<div style="position:absolute;left:834px;top:532px;width:177.5px;height:26px;overflow:hidden;">
<div style="position:absolute;left:4.00px;top:5.77px;font-size:14.8px;line-height:14.8px;white-space:nowrap;color:#595959;transform:scaleX(1.0000);transform-origin:0 0">[CLSGetServiceClientInformation.Data]</div></div>
<svg style="left:1013px;top:532px" width="10" height="14" viewBox="0 0 10 14"><ellipse cx="5" cy="1.8" rx="5" ry="1.8" fill="#3c3c3c"/><path d="M0 3.6 Q5 6 10 3.6 L10 12 Q5 14.4 0 12 Z" fill="#3c3c3c"/></svg>
<div style="position:absolute;left:264.00px;top:564.90px;font-size:15px;line-height:15px;height:15px;white-space:nowrap;color:#000;-webkit-text-stroke:0.12px #000;">Other Phone</div>
<div style="position:absolute;left:451px;top:560px;width:178.5px;height:26px;overflow:hidden;">
<div style="position:absolute;left:3.40px;top:5.07px;font-size:14.8px;line-height:14.8px;white-space:nowrap;color:#595959;transform:scaleX(1.0000);transform-origin:0 0">[CLSGetServiceClientInformation.Data]</div></div>
<svg style="left:629px;top:560px" width="10" height="14" viewBox="0 0 10 14"><ellipse cx="5" cy="1.8" rx="5" ry="1.8" fill="#3c3c3c"/><path d="M0 3.6 Q5 6 10 3.6 L10 12 Q5 14.4 0 12 Z" fill="#3c3c3c"/></svg>
<div style="position:absolute;left:644.40px;top:564.90px;font-size:15px;line-height:15px;height:15px;white-space:nowrap;color:#000;-webkit-text-stroke:0.12px #000;">Postcode</div>
<div style="position:absolute;left:834px;top:560px;width:177.5px;height:26px;overflow:hidden;">
<div style="position:absolute;left:4.00px;top:5.07px;font-size:14.8px;line-height:14.8px;white-space:nowrap;color:#595959;transform:scaleX(1.0000);transform-origin:0 0">[CLSGetServiceClientInformation.Data]</div></div>
<svg style="left:1013px;top:560px" width="10" height="14" viewBox="0 0 10 14"><ellipse cx="5" cy="1.8" rx="5" ry="1.8" fill="#3c3c3c"/><path d="M0 3.6 Q5 6 10 3.6 L10 12 Q5 14.4 0 12 Z" fill="#3c3c3c"/></svg>
<div style="position:absolute;left:264.00px;top:593.10px;font-size:15px;line-height:15px;height:15px;white-space:nowrap;color:#000;-webkit-text-stroke:0.12px #000;">Email Type</div>
<div style="position:absolute;left:451px;top:588px;width:178.5px;height:26px;overflow:hidden;">
<div style="position:absolute;left:3.40px;top:5.27px;font-size:14.8px;line-height:14.8px;white-space:nowrap;color:#595959;transform:scaleX(1.0000);transform-origin:0 0">[CLSGetServiceClientInformation.Data]</div></div>
<svg style="left:629px;top:588px" width="10" height="14" viewBox="0 0 10 14"><ellipse cx="5" cy="1.8" rx="5" ry="1.8" fill="#3c3c3c"/><path d="M0 3.6 Q5 6 10 3.6 L10 12 Q5 14.4 0 12 Z" fill="#3c3c3c"/></svg>
<div style="position:absolute;left:644.40px;top:593.10px;font-size:15px;line-height:15px;height:15px;white-space:nowrap;color:#000;-webkit-text-stroke:0.12px #000;">State</div>
<div style="position:absolute;left:834px;top:588px;width:177.5px;height:26px;overflow:hidden;">
<div style="position:absolute;left:4.00px;top:5.27px;font-size:14.8px;line-height:14.8px;white-space:nowrap;color:#595959;transform:scaleX(1.0000);transform-origin:0 0">[CLSGetServiceClientInformation.Data]</div></div>
<svg style="left:1013px;top:588px" width="10" height="14" viewBox="0 0 10 14"><ellipse cx="5" cy="1.8" rx="5" ry="1.8" fill="#3c3c3c"/><path d="M0 3.6 Q5 6 10 3.6 L10 12 Q5 14.4 0 12 Z" fill="#3c3c3c"/></svg>
<div style="position:absolute;left:264.00px;top:620.80px;font-size:15px;line-height:15px;height:15px;white-space:nowrap;color:#000;-webkit-text-stroke:0.12px #000;">Email</div>
<div style="position:absolute;left:451px;top:616px;width:253px;height:26px;overflow:hidden;">
<div style="position:absolute;left:3.40px;top:4.97px;font-size:14.8px;line-height:14.8px;white-space:nowrap;color:#595959;transform:scaleX(1.0000);transform-origin:0 0">[CLSGetServiceClientInformation.Email]</div></div>
<svg style="left:694.6px;top:616px" width="10" height="14" viewBox="0 0 10 14"><ellipse cx="5" cy="1.8" rx="5" ry="1.8" fill="#3c3c3c"/><path d="M0 3.6 Q5 6 10 3.6 L10 12 Q5 14.4 0 12 Z" fill="#3c3c3c"/></svg>
<div style="position:absolute;left:710.50px;top:620.80px;font-size:15px;line-height:15px;height:15px;white-space:nowrap;color:#000;-webkit-text-stroke:0.12px #000;">Country</div>
<div style="position:absolute;left:834px;top:616px;width:177.5px;height:26px;overflow:hidden;">
<div style="position:absolute;left:4.00px;top:4.97px;font-size:14.8px;line-height:14.8px;white-space:nowrap;color:#595959;transform:scaleX(1.0000);transform-origin:0 0">[CLSGetServiceClientInformation.Data]</div></div>
<svg style="left:1013px;top:616px" width="10" height="14" viewBox="0 0 10 14"><ellipse cx="5" cy="1.8" rx="5" ry="1.8" fill="#3c3c3c"/><path d="M0 3.6 Q5 6 10 3.6 L10 12 Q5 14.4 0 12 Z" fill="#3c3c3c"/></svg>
<div style="position:absolute;left:259px;top:504px;width:765px;height:1px;background:#d9d9d9;"></div>
<div style="position:absolute;left:259px;top:531px;width:765px;height:1px;background:#d9d9d9;"></div>
<div style="position:absolute;left:259px;top:559px;width:765px;height:1px;background:#d9d9d9;"></div>
<div style="position:absolute;left:259px;top:587px;width:765px;height:1px;background:#d9d9d9;"></div>
<div style="position:absolute;left:259px;top:615px;width:765px;height:1px;background:#d9d9d9;"></div>
<div style="position:absolute;left:259px;top:643px;width:765px;height:1px;background:#d9d9d9;"></div>
<div style="position:absolute;left:259px;top:478px;width:1px;height:165px;background:#d9d9d9;"></div>
<div style="position:absolute;left:450px;top:478px;width:1px;height:165px;background:#d9d9d9;"></div>
<div style="position:absolute;left:640px;top:478px;width:1px;height:137px;background:#d9d9d9;"></div>
<div style="position:absolute;left:706px;top:615px;width:1px;height:28px;background:#d9d9d9;"></div>
<div style="position:absolute;left:833px;top:478px;width:1px;height:165px;background:#d9d9d9;"></div>
<div style="position:absolute;left:1023px;top:478px;width:1px;height:165px;background:#d9d9d9;"></div>
<div style="position:absolute;left:392px;top:644px;width:111px;height:26px;border:1px solid #d6d6d6;"></div>
<div style="position:absolute;left:396px;top:651px;width:16px;height:15px;border:1.5px solid #333;"></div>
<div style="position:absolute;left:419.70px;top:648.42px;font-size:17.7px;line-height:17.7px;height:17.7px;white-space:nowrap;color:#111;">checkBox</div>
<div style="position:absolute;left:264.00px;top:682.93px;font-size:17.8px;line-height:17.8px;height:17.8px;white-space:nowrap;color:#1e4a72;">Basic Details</div>
<svg style="left:0;top:0" width="1536" height="80" viewBox="0 0 1536 80">
<!-- scissors -->
<path d="M104.6 29.6 L114.3 39.6 M122.3 29.6 L112.6 39.6" stroke="#b3b3b3" stroke-width="3.1"/>
<path d="M113.4 39.6 L108.6 44.6 M113.4 39.6 L118.2 44.6" stroke="#b3b3b3" stroke-width="2.3"/>
<circle cx="106.4" cy="47" r="3.4" fill="none" stroke="#b3b3b3" stroke-width="2.3"/>
<circle cx="120.3" cy="47" r="3.4" fill="none" stroke="#b3b3b3" stroke-width="2.3"/>
<path d="M112.2 38.5 L114.7 38.5 L113.4 40.8 Z" fill="#e3e3e3"/>
<!-- copy -->
<path fill="#b3b3b3" d="M159.3 26.2 L167.9 26.2 L167.9 32.8 L175 32.8 L175 47 L168.4 47 L168.4 38 L162 32 L159.3 32 Z M170.5 26.7 L175 31 L170.5 31 Z"/>
<path fill="#b3b3b3" d="M150 33.1 L159 33.1 L159 39.8 L166 39.8 L166 54 L150 54 Z M161.2 34.4 L165.6 38.6 L161.2 38.6 Z"/>
<!-- paste -->
<path fill="#b3b3b3" d="M199.2 28.5 L200.8 28.5 L200.8 33.5 L214.2 33.5 L214.2 28.5 L215.8 28.5 L215.8 35 L208.3 35 L208.3 47 L199.2 47 Z"/>
<rect x="204" y="29" width="7" height="2.3" fill="#b3b3b3"/><rect x="206.6" y="26" width="1.8" height="3.2" fill="#b3b3b3"/>
<path fill="#b3b3b3" d="M211 38.1 L218.5 38.1 L218.5 45 L225 45 L225 54 L211 54 Z M220.5 38.3 L224.8 42.5 L220.5 42.5 Z"/>
<!-- delete X -->
<path d="M253.5 30 L271.5 48 M271.5 30 L253.5 48" stroke="#3d3d3d" stroke-width="2.9"/>
<rect x="289" y="21" width="1" height="39" fill="#c9c9c9"/>
<!-- undo -->
<path fill="#3d3d3d" d="M298.8 36.7 L310.2 28.9 L310.2 32.6 C320 32.6 327.3 39.5 326.8 51.2 C323.5 44 318 40.5 310.2 40.6 L310.2 44.6 Z"/>
<!-- redo -->
<path fill="#b3b3b3" d="M376.6 36.7 L365.2 28.9 L365.2 32.6 C355.4 32.6 348.1 39.5 348.6 51.2 C351.9 44 357.4 40.5 365.2 40.6 L365.2 44.6 Z"/>
<rect x="389" y="21" width="1" height="39" fill="#c9c9c9"/>
<!-- minus -->
<rect x="401.6" y="37.8" width="23.2" height="4.8" fill="#3d3d3d"/>
<!-- plus -->
<rect x="566" y="28.5" width="4.8" height="23.2" fill="#3d3d3d"/>
<rect x="556.8" y="37.9" width="23.2" height="4.6" fill="#3d3d3d"/>
<rect x="594" y="21" width="1" height="39" fill="#c9c9c9"/>
<!-- preview -->
<path fill="#3d3d3d" d="M604 26 L617.9 26 L617.9 33 L624.7 33 L624.7 37 C620 35.5 614.5 37 612.5 42 C611.7 44.5 612 47 612.6 49 L604 49 Z M619.5 26.3 L624.7 31.5 L619.5 31.5 Z"/>
<circle cx="618.8" cy="43.5" r="5.2" fill="none" stroke="#3d3d3d" stroke-width="2.1"/>
<path d="M622.6 47.5 L628.5 53" stroke="#3d3d3d" stroke-width="2.4" stroke-linecap="round"/>
<!-- db warning -->
<ellipse cx="663.3" cy="29.7" rx="9.3" ry="3.7" fill="#3d3d3d"/>
<path fill="#3d3d3d" d="M654 35.3 C658 37.6 668 37.6 672.6 35.3 L672.6 37 C668.5 37.5 666 40 665 42 C660 42 656.5 41.3 654 40.2 Z"/>
<path fill="#3d3d3d" d="M654 43.2 C657 44.8 661 45.2 664.3 45.2 C664 47.5 664.3 49.5 665 51.2 C660.5 51.2 656.5 50.3 654 48.8 Z"/>
<circle cx="673.8" cy="45.8" r="8" fill="#3d3d3d"/>
<rect x="672.5" y="39.8" width="2.6" height="7.4" fill="#e3e3e3"/>
<rect x="672.5" y="49.3" width="2.6" height="2.6" fill="#e3e3e3"/>
<!-- save -->
<path fill="#3d3d3d" d="M706.4 26.1 L727.6 26.1 L731.8 30.3 L731.8 51.8 Q731.8 53.8 729.8 53.8 L706.4 53.8 Q704.4 53.8 704.4 51.8 L704.4 28.1 Q704.4 26.1 706.4 26.1 Z"/>
<rect x="709.6" y="27.1" width="16" height="10.1" fill="#e3e3e3"/>
<rect x="720.7" y="28.7" width="2.6" height="6.6" fill="#3d3d3d"/>
<rect x="707.4" y="40.1" width="21.8" height="13.1" fill="#e3e3e3"/>
<!-- close -->
<rect x="753.9" y="26.1" width="27.4" height="27.7" rx="2.5" fill="#3d3d3d"/>
<path d="M761.2 32.9 L774 45.6 M774 32.9 L761.2 45.6" stroke="#e3e3e3" stroke-width="4.2"/>
</svg>
<div style="position:absolute;left:444px;top:25px;width:92px;height:30px;background:#fafafa;border:1px solid #d6d6d6;"></div>
<div style="position:absolute;left:456.80px;top:35.61px;font-size:11.8px;line-height:11.8px;height:11.8px;white-space:nowrap;color:#333;">100%</div>
<svg style="left:517px;top:37px" width="10" height="5" viewBox="0 0 10 5"><path d="M0 0 L9.8 0 L4.9 4.7 Z" fill="#222"/></svg>
<svg style="left:0;top:0" width="80" height="693" viewBox="0 0 80 693">
<rect x="28" y="28.5" width="23" height="4.6" fill="#3d3d3d"/>
<rect x="28" y="37.8" width="23" height="4.6" fill="#3d3d3d"/>
<rect x="28" y="47.1" width="23" height="4.6" fill="#3d3d3d"/>
<!-- checkbox -->
<rect x="27.9" y="141" width="23.1" height="23" fill="#3d3d3d"/>
<path d="M31.5 153.5 L36.3 158.6 L47.5 146" stroke="#fff" stroke-width="2.6" fill="none"/>
<!-- richtext -->
<path fill="#3d3d3d" d="M30.1 187.5 L41.6 187.5 L41.6 194.4 L48.5 194.4 L48.5 210.4 L30.1 210.4 Z"/>
<path fill="#3d3d3d" d="M44.2 187.9 L48.1 191.8 L44.2 191.8 Z"/>
<path fill="#fff" d="M37 196.8 L44.6 196.8 L48.6 200.8 L48.6 211 L43.3 211 L37 204.2 Z"/>
<path fill="#3d3d3d" d="M39.4 199.2 L41.6 199.2 L48.5 206.1 L48.5 209.9 L47.6 209.9 L39.4 201.7 Z"/>
<!-- picture -->
<rect x="27.9" y="235.9" width="23.1" height="18.7" fill="#3d3d3d"/>
<path fill="#fff" d="M30.2 252.6 L30.2 249.6 L35.5 244.5 L38 247 L43.5 241.2 L49 246.5 L49 252.6 Z"/>
<circle cx="34.6" cy="240.9" r="2" fill="#fff"/>
<!-- rectangle -->
<rect x="28.9" y="281" width="21.1" height="21" fill="none" stroke="#3d3d3d" stroke-width="2"/>
</svg>
<svg style="left:0;top:0" width="80" height="693" viewBox="0 0 80 693">
<rect x="25.3" y="324.0" width="6.9" height="4.6" fill="#3d3d3d"/><rect x="34.0" y="324.0" width="6.9" height="4.6" fill="#3d3d3d"/><rect x="42.8" y="324.0" width="6.9" height="4.6" fill="#3d3d3d"/><rect x="25.3" y="330.5" width="6.9" height="4.6" fill="#3d3d3d"/><rect x="34.0" y="330.5" width="6.9" height="4.6" fill="#3d3d3d"/><rect x="42.8" y="330.5" width="6.9" height="4.6" fill="#3d3d3d"/><rect x="25.3" y="337.0" width="6.9" height="4.6" fill="#3d3d3d"/><rect x="34.0" y="337.0" width="6.9" height="4.6" fill="#3d3d3d"/><rect x="42.8" y="337.0" width="6.9" height="4.6" fill="#3d3d3d"/><rect x="25.3" y="343.5" width="6.9" height="4.6" fill="#3d3d3d"/><rect x="34.0" y="343.5" width="6.9" height="4.6" fill="#3d3d3d"/><rect x="42.8" y="343.5" width="6.9" height="4.6" fill="#3d3d3d"/>
<!-- ab -->
<rect x="27.9" y="373.5" width="10.6" height="21.2" fill="#3d3d3d"/>
<rect x="39.6" y="373.5" width="10.6" height="21.2" fill="#3d3d3d"/>
<text x="33.2" y="391.5" font-family="Liberation Mono" font-size="14.5" fill="#fff" text-anchor="middle">a</text>
<text x="44.9" y="391.5" font-family="Liberation Mono" font-size="14.5" fill="#fff" text-anchor="middle">b</text>
<!-- line -->
<rect x="26.3" y="418.5" width="6.6" height="6.6" fill="none" stroke="#3d3d3d" stroke-width="1.8"/>
<rect x="45.1" y="436.2" width="6.8" height="7" fill="none" stroke="#3d3d3d" stroke-width="1.8"/>
<path d="M32.5 424.7 L45.5 436.6" stroke="#3d3d3d" stroke-width="1.9"/>
<!-- shape -->
<rect x="30.3" y="465.4" width="13.7" height="12.8" fill="#3d3d3d"/>
<circle cx="41.6" cy="478.2" r="9.3" fill="#fff"/>
<circle cx="41.6" cy="478.2" r="7.5" fill="#3d3d3d"/>
<!-- barcode -->
<rect x="25.3" y="509" width="2.2" height="23" fill="#3d3d3d"/>
<rect x="30.3" y="509" width="4.3" height="20.7" fill="#3d3d3d"/>
<rect x="37.3" y="509" width="1.5" height="18.3" fill="#3d3d3d"/>
<rect x="41.6" y="509" width="4.7" height="20.7" fill="#3d3d3d"/>
<rect x="48.7" y="509" width="2.3" height="23" fill="#3d3d3d"/>
<!-- chart -->
<rect x="25.6" y="566.9" width="4.2" height="13.8" fill="#3d3d3d"/>
<rect x="32.8" y="562.5" width="4.1" height="18.2" fill="#3d3d3d"/>
<rect x="39.7" y="557.9" width="4.1" height="22.8" fill="#3d3d3d"/>
<rect x="46.6" y="569.5" width="4.4" height="11.2" fill="#3d3d3d"/>
<!-- gauge -->
<circle cx="38.2" cy="614.6" r="11.4" fill="none" stroke="#3d3d3d" stroke-width="1.9"/>
<path d="M31.6 619.4 A7.3 7.3 0 0 1 36.2 607.4" fill="none" stroke="#3d3d3d" stroke-width="1.9"/>
<path d="M39.5 607.2 A7.3 7.3 0 0 1 45.1 619.4" fill="none" stroke="#3d3d3d" stroke-width="1.9"/>
<path d="M33.3 609.5 L38.5 614.8" stroke="#3d3d3d" stroke-width="1.9"/>
<circle cx="38.3" cy="614.8" r="1.8" fill="#3d3d3d"/>
<!-- sparkline -->
<rect x="28" y="652.7" width="23" height="18.3" fill="#3d3d3d"/>
<path d="M30.4 668.3 L33.5 663.3 L36 666.3 L40.5 661.3 L42.5 664.5 L47.5 658.5 L48.3 662" fill="none" stroke="#fff" stroke-width="2.2" stroke-linejoin="miter"/>
</svg>
<div style="position:absolute;left:26.5px;top:89px;font-family:&quot;Liberation Serif&quot;,serif;font-weight:bold;font-size:34px;line-height:34px;color:#3d3d3d;">A</div>
<div style="position:absolute;left:0px;top:683px;width:2px;height:4px;background:#17c3ee;"></div>
<svg style="left:1510px;top:10px" width="10" height="11" viewBox="0 0 10 11"><path d="M2 1 L7 5.3 L2 9.6" fill="none" stroke="#333" stroke-width="2"/></svg>
<div style="position:absolute;left:1090.40px;top:47.31px;font-size:11.45px;line-height:11.45px;height:11.45px;white-space:nowrap;color:#333;font-weight:bold;">PROPERTIES</div>
<div style="position:absolute;left:1093px;top:76px;width:218px;height:33px;background:#f7f7f7;border:1px solid #dedede;"></div>
<div style="position:absolute;left:1105.60px;top:87.26px;font-size:11.98px;line-height:11.98px;height:11.98px;white-space:nowrap;color:#333;">tableCell179 (XRTableCell)</div>
<svg style="left:1291px;top:91px" width="11" height="6" viewBox="0 0 11 6"><path d="M0 0 L10 0 L5 5.2 Z" fill="#222"/></svg>
<div style="position:absolute;left:1320px;top:76px;width:33px;height:33px;background:#f5f5f5;border:1px solid #e2e2e2;border-radius:3px;"></div>
<div style="position:absolute;left:1360px;top:76px;width:32px;height:33px;background:#cfcfcf;border-radius:3px;"></div>
<div style="position:absolute;left:1399px;top:76px;width:33px;height:33px;background:#f5f5f5;border:1px solid #e2e2e2;border-radius:3px;"></div>
<svg style="left:0;top:0" width="1536" height="120" viewBox="0 0 1536 120">
<text x="1331.8" y="91.2" font-family="Liberation Sans" font-weight="bold" font-size="10.6" fill="#666" text-anchor="middle">A</text>
<text x="1331.8" y="101.8" font-family="Liberation Sans" font-weight="bold" font-size="10.6" fill="#666" text-anchor="middle">Z</text>
<rect x="1340.6" y="83.3" width="2" height="15" fill="#666"/>
<path d="M1337.7 97 L1345.7 97 L1341.7 101.8 Z" fill="#666"/>
<rect x="1368.8" y="83.9" width="6.4" height="6.4" fill="none" stroke="#555" stroke-width="1.2"/>
<rect x="1371" y="86.1" width="2" height="2" fill="#555"/>
<rect x="1368.8" y="94.5" width="6.4" height="6.6" fill="none" stroke="#555" stroke-width="1.2"/>
<rect x="1371" y="96.8" width="2" height="2" fill="#555"/>
<rect x="1377.3" y="84" width="6.7" height="1.1" fill="#555"/><rect x="1377.3" y="86.6" width="6.7" height="1.1" fill="#555"/><rect x="1377.3" y="89.1" width="6.7" height="1.1" fill="#555"/>
<rect x="1377.3" y="94.9" width="6.7" height="1.1" fill="#555"/><rect x="1377.3" y="97.3" width="6.7" height="1.1" fill="#555"/><rect x="1377.3" y="99.6" width="6.7" height="1.1" fill="#555"/>
<circle cx="1416.8" cy="91.1" r="4.6" fill="none" stroke="#333" stroke-width="2.6"/>
<path d="M1413 95.2 L1409.4 98.8" stroke="#333" stroke-width="3" stroke-linecap="round"/>
</svg>
<div style="position:absolute;left:1075px;top:119px;width:394px;height:1px;background:#e6e6e6;"></div>
<svg style="left:1091px;top:139px" width="8" height="7" viewBox="0 0 8 7"><path d="M0 0 L7.2 0 L3.6 6.1 Z" fill="#333"/></svg>
<div style="position:absolute;left:1103.50px;top:137.67px;font-size:11.49px;line-height:11.49px;height:11.49px;white-space:nowrap;color:#333;font-weight:bold;">ACTIONS</div>
<div style="position:absolute;left:1075px;top:167px;width:394px;height:391px;background:#f2f2f2;"></div>
<div style="position:absolute;left:1094.00px;top:223.50px;font-size:12.4px;line-height:12.4px;height:12.4px;white-space:nowrap;color:#333;font-weight:bold;">Text</div>
<div style="position:absolute;left:1235px;top:214px;width:197px;height:30px;background:#f9f9f9;border:1px solid #dedede;"></div>
<div style="position:absolute;left:1246.50px;top:223.37px;font-size:12.2px;line-height:12.2px;height:12.2px;white-space:nowrap;color:#444;">Contact Name</div>
<div style="position:absolute;left:1440px;top:223px;width:10px;height:10px;background:#fff;border:1px solid #dcdcdc;"></div>
<svg style="left:1096.3px;top:268.5px" width="7" height="9" viewBox="0 0 7 9"><path d="M0 0.5 L5.2 4 L0 7.5 Z" fill="#333"/></svg>
<div style="position:absolute;left:1111.00px;top:266.08px;font-size:11.48px;line-height:11.48px;height:11.48px;white-space:nowrap;color:#333;font-weight:bold;">DATA BINDING</div>
<div style="position:absolute;left:1235px;top:258px;width:197px;height:30px;background:#f9f9f9;border:1px solid #dedede;"></div>
<svg style="left:1411px;top:270px" width="11" height="6" viewBox="0 0 11 6"><path d="M0 0 L10 0 L5 5.2 Z" fill="#222"/></svg>
<div style="position:absolute;left:1440px;top:267px;width:10px;height:10px;background:#e8e8e8;border:1px solid #dcdcdc;"></div>
<div style="position:absolute;left:1094.30px;top:312.67px;font-size:12.2px;line-height:12.2px;height:12.2px;white-space:nowrap;color:#444;">Text Format String</div>
<div style="position:absolute;left:1235px;top:302px;width:197px;height:30px;background:#f9f9f9;border:1px solid #dedede;"></div>
<svg style="left:1411px;top:314px" width="14" height="4" viewBox="0 0 14 4"><circle cx="2" cy="2" r="1.3" fill="#333"/><circle cx="6" cy="2" r="1.3" fill="#333"/><circle cx="10" cy="2" r="1.3" fill="#333"/></svg>
<div style="position:absolute;left:1440px;top:311px;width:10px;height:10px;background:#e8e8e8;border:1px solid #dcdcdc;"></div>
<svg style="left:1096.3px;top:357px" width="7" height="9" viewBox="0 0 7 9"><path d="M0 0.5 L5.2 4 L0 7.5 Z" fill="#333"/></svg>
<div style="position:absolute;left:1111.80px;top:355.13px;font-size:11.31px;line-height:11.31px;height:11.31px;white-space:nowrap;color:#333;font-weight:bold;">SUMMARY</div>
<div style="position:absolute;left:1440px;top:355px;width:10px;height:10px;background:#fff;border:1px solid #dcdcdc;"></div>
<div style="position:absolute;left:1094.30px;top:399.67px;font-size:12.2px;line-height:12.2px;height:12.2px;white-space:nowrap;color:#444;transform:scaleX(0.9833);transform-origin:0 0;">Can Grow</div>
<div style="position:absolute;left:1235px;top:390px;width:25px;height:25px;background:#fafafa;border:1px solid #e0e0e0;"></div>
<svg style="left:1235px;top:390px" width="25" height="25" viewBox="0 0 25 25"><path d="M4.2 12.2 L9.5 18.3 L20.7 5.5" fill="none" stroke="#4a4a4a" stroke-width="2.8"/></svg>
<div style="position:absolute;left:1440px;top:399px;width:10px;height:10px;background:#e8e8e8;border:1px solid #dcdcdc;"></div>
<div style="position:absolute;left:1094.30px;top:443.97px;font-size:12.2px;line-height:12.2px;height:12.2px;white-space:nowrap;color:#444;transform:scaleX(0.9893);transform-origin:0 0;">Can Shrink</div>
<div style="position:absolute;left:1235px;top:433px;width:25px;height:25px;background:#fafafa;border:1px solid #e0e0e0;"></div>
<div style="position:absolute;left:1440px;top:442px;width:10px;height:10px;background:#e8e8e8;border:1px solid #dcdcdc;"></div>
<div style="position:absolute;left:1094.30px;top:488.07px;font-size:12.2px;line-height:12.2px;height:12.2px;white-space:nowrap;color:#444;transform:scaleX(1.0749);transform-origin:0 0;">Multiline</div>
<div style="position:absolute;left:1235px;top:478px;width:25px;height:25px;background:#fafafa;border:1px solid #e0e0e0;"></div>
<div style="position:absolute;left:1440px;top:487px;width:10px;height:10px;background:#e8e8e8;border:1px solid #dcdcdc;"></div>
<div style="position:absolute;left:1094.30px;top:531.67px;font-size:12.2px;line-height:12.2px;height:12.2px;white-space:nowrap;color:#444;transform:scaleX(1.0418);transform-origin:0 0;">Word Wrap</div>
<div style="position:absolute;left:1235px;top:522px;width:25px;height:25px;background:#fafafa;border:1px solid #e0e0e0;"></div>
<svg style="left:1235px;top:522px" width="25" height="25" viewBox="0 0 25 25"><path d="M4.2 12.2 L9.5 18.3 L20.7 5.5" fill="none" stroke="#4a4a4a" stroke-width="2.8"/></svg>
<div style="position:absolute;left:1440px;top:531px;width:10px;height:10px;background:#e8e8e8;border:1px solid #dcdcdc;"></div>
<svg style="left:1092.5px;top:576.5px" width="7" height="9" viewBox="0 0 7 9"><path d="M0 0.5 L5.2 4 L0 7.5 Z" fill="#333"/></svg>
<div style="position:absolute;left:1104.20px;top:575.75px;font-size:11.4px;line-height:11.4px;height:11.4px;white-space:nowrap;color:#333;font-weight:bold;transform:scaleX(0.9787);transform-origin:0 0;">STYLES</div>
<svg style="left:1092.5px;top:623.5px" width="7" height="9" viewBox="0 0 7 9"><path d="M0 0.5 L5.2 4 L0 7.5 Z" fill="#333"/></svg>
<div style="position:absolute;left:1104.20px;top:622.15px;font-size:11.4px;line-height:11.4px;height:11.4px;white-space:nowrap;color:#333;font-weight:bold;transform:scaleX(1.0048);transform-origin:0 0;">APPEARANCE</div>
<svg style="left:1092.5px;top:669.5px" width="7" height="9" viewBox="0 0 7 9"><path d="M0 0.5 L5.2 4 L0 7.5 Z" fill="#333"/></svg>
<div style="position:absolute;left:1104.20px;top:667.95px;font-size:11.4px;line-height:11.4px;height:11.4px;white-space:nowrap;color:#333;font-weight:bold;transform:scaleX(1.0046);transform-origin:0 0;">BEHAVIOR</div>
<div style="position:absolute;left:1075px;top:604px;width:394px;height:1px;background:#e3e3e3;"></div>
<div style="position:absolute;left:1075px;top:650px;width:394px;height:1px;background:#e3e3e3;"></div>
<svg style="left:0;top:0" width="1536" height="200" viewBox="0 0 1536 200">
<g transform="translate(1498.2 53.9)"><circle cx="0.00" cy="-9.30" r="2.45" fill="#666"/><circle cx="6.58" cy="-6.58" r="2.45" fill="#666"/><circle cx="9.30" cy="-0.00" r="2.45" fill="#666"/><circle cx="6.58" cy="6.58" r="2.45" fill="#666"/><circle cx="0.00" cy="9.30" r="2.45" fill="#666"/><circle cx="-6.58" cy="6.58" r="2.45" fill="#666"/><circle cx="-9.30" cy="0.00" r="2.45" fill="#666"/><circle cx="-6.58" cy="-6.58" r="2.45" fill="#666"/><circle r="8.4" fill="#666"/><circle r="4.8" fill="#fff"/><circle r="2.3" fill="#666"/></g>
<ellipse cx="1497" cy="97.5" rx="8.1" ry="2.5" fill="#333"/>
<path d="M1488.9 101 Q1497 104.1 1505.1 101 L1505.1 105.1 Q1497 108.3 1488.9 105.1 Z" fill="#333"/>
<path d="M1488.9 108 Q1497 111.1 1505.1 108 L1505.1 112.3 Q1497 115.1 1488.9 112.3 Z" fill="#333"/>
<path d="M1488.9 115 Q1497 118.2 1505.1 115 L1505.1 118.9 Q1497 122.5 1488.9 118.9 Z" fill="#333"/>
<rect x="1491.6" y="151.4" width="11.4" height="6.2" fill="#333"/>
<rect x="1496.5" y="157" width="1.6" height="6" fill="#333"/>
<rect x="1489.5" y="162.5" width="15.6" height="1.6" fill="#333"/>
<rect x="1489.2" y="163" width="1.6" height="7" fill="#333"/>
<rect x="1503.8" y="163" width="1.6" height="7" fill="#333"/>
<rect x="1484.3" y="170" width="11.5" height="7.4" fill="#333"/>
<rect x="1498.5" y="170" width="11.4" height="7.4" fill="#333"/>
</svg>
<svg style="left:0;top:0" width="1536" height="200" viewBox="0 0 1536 200"><rect x="1087.8" y="178.2" width="8.1" height="2.3" fill="#6f6f6f"/><rect x="1087.80" y="182.30" width="1" height="1" fill="#999"/><rect x="1089.90" y="182.30" width="1" height="1" fill="#999"/><rect x="1092.00" y="182.30" width="1" height="1" fill="#999"/><rect x="1094.10" y="182.30" width="1" height="1" fill="#999"/><rect x="1087.80" y="184.40" width="1" height="1" fill="#999"/><rect x="1089.90" y="184.40" width="1" height="1" fill="#999"/><rect x="1092.00" y="184.40" width="1" height="1" fill="#999"/><rect x="1094.10" y="184.40" width="1" height="1" fill="#999"/><rect x="1087.80" y="186.50" width="1" height="1" fill="#999"/><rect x="1089.90" y="186.50" width="1" height="1" fill="#999"/><rect x="1092.00" y="186.50" width="1" height="1" fill="#999"/><rect x="1094.10" y="186.50" width="1" height="1" fill="#999"/><rect x="1092.50" y="186.60" width="6.8" height="2.1" fill="#6f6f6f"/><rect x="1094.90" y="184.20" width="2.1" height="6.8" fill="#6f6f6f"/><rect x="1128.40" y="179.30" width="1" height="1" fill="#999"/><rect x="1130.50" y="179.30" width="1" height="1" fill="#999"/><rect x="1132.60" y="179.30" width="1" height="1" fill="#999"/><rect x="1134.70" y="179.30" width="1" height="1" fill="#999"/><rect x="1128.40" y="181.40" width="1" height="1" fill="#999"/><rect x="1130.50" y="181.40" width="1" height="1" fill="#999"/><rect x="1132.60" y="181.40" width="1" height="1" fill="#999"/><rect x="1134.70" y="181.40" width="1" height="1" fill="#999"/><rect x="1128.40" y="183.50" width="1" height="1" fill="#999"/><rect x="1130.50" y="183.50" width="1" height="1" fill="#999"/><rect x="1132.60" y="183.50" width="1" height="1" fill="#999"/><rect x="1134.70" y="183.50" width="1" height="1" fill="#999"/><rect x="1128.4" y="186.4" width="3.7" height="2.1" fill="#6f6f6f"/><rect x="1133.30" y="186.60" width="6.8" height="2.1" fill="#6f6f6f"/><rect x="1135.70" y="184.20" width="2.1" height="6.8" fill="#6f6f6f"/><rect x="1168.7" y="179.4" width="8.1" height="2.1" fill="#6f6f6f"/><rect x="1168.70" y="183.30" width="1" height="1" fill="#999"/><rect x="1170.80" y="183.30" width="1" height="1" fill="#999"/><rect x="1172.90" y="183.30" width="1" height="1" fill="#999"/><rect x="1175.00" y="183.30" width="1" height="1" fill="#999"/><rect x="1168.70" y="185.40" width="1" height="1" fill="#999"/><rect x="1170.80" y="185.40" width="1" height="1" fill="#999"/><rect x="1172.90" y="185.40" width="1" height="1" fill="#999"/><rect x="1175.00" y="185.40" width="1" height="1" fill="#999"/><rect x="1168.70" y="187.50" width="1" height="1" fill="#999"/><rect x="1170.80" y="187.50" width="1" height="1" fill="#999"/><rect x="1172.90" y="187.50" width="1" height="1" fill="#999"/><rect x="1175.00" y="187.50" width="1" height="1" fill="#999"/><path d="M1174.00 185.50 L1178.80 190.30 M1178.80 185.50 L1174.00 190.30" stroke="#6f6f6f" stroke-width="1.7"/><rect x="1209.30" y="179.30" width="1" height="1" fill="#999"/><rect x="1211.40" y="179.30" width="1" height="1" fill="#999"/><rect x="1213.50" y="179.30" width="1" height="1" fill="#999"/><rect x="1215.60" y="179.30" width="1" height="1" fill="#999"/><rect x="1209.30" y="181.40" width="1" height="1" fill="#999"/><rect x="1211.40" y="181.40" width="1" height="1" fill="#999"/><rect x="1213.50" y="181.40" width="1" height="1" fill="#999"/><rect x="1215.60" y="181.40" width="1" height="1" fill="#999"/><rect x="1209.30" y="183.50" width="1" height="1" fill="#999"/><rect x="1211.40" y="183.50" width="1" height="1" fill="#999"/><rect x="1213.50" y="183.50" width="1" height="1" fill="#999"/><rect x="1215.60" y="183.50" width="1" height="1" fill="#999"/><rect x="1209.30" y="185.60" width="1" height="1" fill="#999"/><rect x="1211.40" y="185.60" width="1" height="1" fill="#999"/><rect x="1213.50" y="185.60" width="1" height="1" fill="#999"/><rect x="1215.60" y="185.60" width="1" height="1" fill="#999"/><rect x="1213.90" y="186.60" width="6.8" height="2.1" fill="#6f6f6f"/><rect x="1216.30" y="184.20" width="2.1" height="6.8" fill="#6f6f6f"/><rect x="1249.80" y="179.10" width="1" height="1" fill="#999"/><rect x="1251.90" y="179.10" width="1" height="1" fill="#999"/><rect x="1254.00" y="179.10" width="1" height="1" fill="#999"/><rect x="1256.10" y="179.10" width="1" height="1" fill="#999"/><rect x="1249.80" y="181.20" width="1" height="1" fill="#999"/><rect x="1251.90" y="181.20" width="1" height="1" fill="#999"/><rect x="1254.00" y="181.20" width="1" height="1" fill="#999"/><rect x="1256.10" y="181.20" width="1" height="1" fill="#999"/><rect x="1249.80" y="183.30" width="1" height="1" fill="#999"/><rect x="1251.90" y="183.30" width="1" height="1" fill="#999"/><rect x="1254.00" y="183.30" width="1" height="1" fill="#999"/><rect x="1256.10" y="183.30" width="1" height="1" fill="#999"/><rect x="1249.80" y="185.40" width="1" height="1" fill="#999"/><rect x="1251.90" y="185.40" width="1" height="1" fill="#999"/><rect x="1254.00" y="185.40" width="1" height="1" fill="#999"/><rect x="1256.10" y="185.40" width="1" height="1" fill="#999"/><path d="M1255.10 184.40 L1259.90 189.20 M1259.90 184.40 L1255.10 189.20" stroke="#6f6f6f" stroke-width="1.7"/><rect x="1290" y="178.2" width="1.8" height="7.7" fill="#6f6f6f"/><rect x="1293.00" y="178.40" width="1" height="1" fill="#999"/><rect x="1295.10" y="178.40" width="1" height="1" fill="#999"/><rect x="1297.20" y="178.40" width="1" height="1" fill="#999"/><rect x="1293.00" y="180.50" width="1" height="1" fill="#999"/><rect x="1295.10" y="180.50" width="1" height="1" fill="#999"/><rect x="1297.20" y="180.50" width="1" height="1" fill="#999"/><rect x="1293.00" y="182.60" width="1" height="1" fill="#999"/><rect x="1295.10" y="182.60" width="1" height="1" fill="#999"/><rect x="1297.20" y="182.60" width="1" height="1" fill="#999"/><rect x="1293.00" y="184.70" width="1" height="1" fill="#999"/><rect x="1295.10" y="184.70" width="1" height="1" fill="#999"/><rect x="1297.20" y="184.70" width="1" height="1" fill="#999"/><rect x="1295.40" y="185.20" width="6.8" height="2.1" fill="#6f6f6f"/><rect x="1297.80" y="182.80" width="2.1" height="6.8" fill="#6f6f6f"/><rect x="1331.70" y="179.10" width="1" height="1" fill="#999"/><rect x="1333.80" y="179.10" width="1" height="1" fill="#999"/><rect x="1335.90" y="179.10" width="1" height="1" fill="#999"/><rect x="1331.70" y="181.20" width="1" height="1" fill="#999"/><rect x="1333.80" y="181.20" width="1" height="1" fill="#999"/><rect x="1335.90" y="181.20" width="1" height="1" fill="#999"/><rect x="1331.70" y="183.30" width="1" height="1" fill="#999"/><rect x="1333.80" y="183.30" width="1" height="1" fill="#999"/><rect x="1335.90" y="183.30" width="1" height="1" fill="#999"/><rect x="1331.70" y="185.40" width="1" height="1" fill="#999"/><rect x="1333.80" y="185.40" width="1" height="1" fill="#999"/><rect x="1335.90" y="185.40" width="1" height="1" fill="#999"/><rect x="1339.1" y="179.1" width="1.9" height="3.7" fill="#6f6f6f"/><rect x="1336.40" y="186.40" width="6.8" height="2.1" fill="#6f6f6f"/><rect x="1338.80" y="184.00" width="2.1" height="6.8" fill="#6f6f6f"/><rect x="1371.8" y="179.3" width="2.3" height="8.4" fill="#6f6f6f"/><rect x="1375.20" y="179.30" width="1" height="1" fill="#999"/><rect x="1377.30" y="179.30" width="1" height="1" fill="#999"/><rect x="1379.40" y="179.30" width="1" height="1" fill="#999"/><rect x="1375.20" y="181.40" width="1" height="1" fill="#999"/><rect x="1377.30" y="181.40" width="1" height="1" fill="#999"/><rect x="1379.40" y="181.40" width="1" height="1" fill="#999"/><rect x="1375.20" y="183.50" width="1" height="1" fill="#999"/><rect x="1377.30" y="183.50" width="1" height="1" fill="#999"/><rect x="1379.40" y="183.50" width="1" height="1" fill="#999"/><rect x="1375.20" y="185.60" width="1" height="1" fill="#999"/><rect x="1377.30" y="185.60" width="1" height="1" fill="#999"/><rect x="1379.40" y="185.60" width="1" height="1" fill="#999"/><path d="M1378.30 184.40 L1383.10 189.20 M1383.10 184.40 L1378.30 189.20" stroke="#6f6f6f" stroke-width="1.7"/><path d="M1418.5 178.6 L1416.8 180.4 L1420.2 180.4 Z M1418.5 191.7 L1416.8 189.9 L1420.2 189.9 Z M1411.9 185.2 L1413.8 183.5 L1413.8 186.9 Z M1425.1 185.2 L1423.2 183.5 L1423.2 186.9 Z" fill="#6f6f6f"/><text x="1418.5" y="188.7" font-family="Liberation Sans" font-weight="bold" font-size="9.4" fill="#6f6f6f" text-anchor="middle">A</text></svg>
<div style="position:absolute;left:805px;top:379.5px;width:235px;height:41.5px;border:2px solid #f5141b;box-shadow:2px 2px 3px rgba(0,0,0,0.35), inset 2px 2px 3px rgba(0,0,0,0.25);"></div>
<div style="position:absolute;left:1068.5px;top:165px;width:85.5px;height:35px;border:2px solid #f5141b;box-shadow:2px 2px 3px rgba(0,0,0,0.35), inset 2px 2px 3px rgba(0,0,0,0.25);"></div>
<div style="position:absolute;left:1192px;top:164.2px;width:36.5px;height:35.0px;border:2px solid #f5141b;box-shadow:2px 2px 3px rgba(0,0,0,0.35), inset 2px 2px 3px rgba(0,0,0,0.25);"></div>
<div style="position:absolute;left:1271.5px;top:164.2px;width:86.0px;height:34.400000000000006px;border:2px solid #f5141b;box-shadow:2px 2px 3px rgba(0,0,0,0.35), inset 2px 2px 3px rgba(0,0,0,0.25);"></div>
<div style="position:absolute;left:1443px;top:26px;width:82px;height:58.5px;border:2px solid #f5141b;box-shadow:2px 2px 3px rgba(0,0,0,0.35), inset 2px 2px 3px rgba(0,0,0,0.25);"></div>
<svg style="left:0;top:0" width="1536" height="693" viewBox="0 0 1536 693"><defs><filter id="sh" x="-5%" y="-5%" width="110%" height="110%"><feDropShadow dx="2" dy="2" stdDeviation="1.6" flood-color="#000" flood-opacity="0.35"/></filter></defs><g filter="url(#sh)"><path d="M913.3 374.6 L959.4 97.3" stroke="#f5141b" stroke-width="1.6"/><path d="M961.4 100.9 L1441 55.3" stroke="#f5141b" stroke-width="1.6"/><path d="M1441.0 55.3 L1431.4 60.4 L1430.6 52.1 Z" fill="#f5141b"/><path d="M1446.7 80.2 L1134.9 165.2" stroke="#f5141b" stroke-width="1.6"/><path d="M1134.9 165.2 L1143.4 158.5 L1145.7 166.6 Z" fill="#f5141b"/><path d="M1451.7 88.6 L1230.6 163.9" stroke="#f5141b" stroke-width="1.6"/><path d="M1230.6 163.9 L1238.7 156.7 L1241.4 164.7 Z" fill="#f5141b"/><path d="M1468.4 87.3 L1359.1 181.5" stroke="#f5141b" stroke-width="1.6"/><path d="M1359.1 181.5 L1363.9 171.8 L1369.4 178.2 Z" fill="#f5141b"/></g></svg>
</body></html>
